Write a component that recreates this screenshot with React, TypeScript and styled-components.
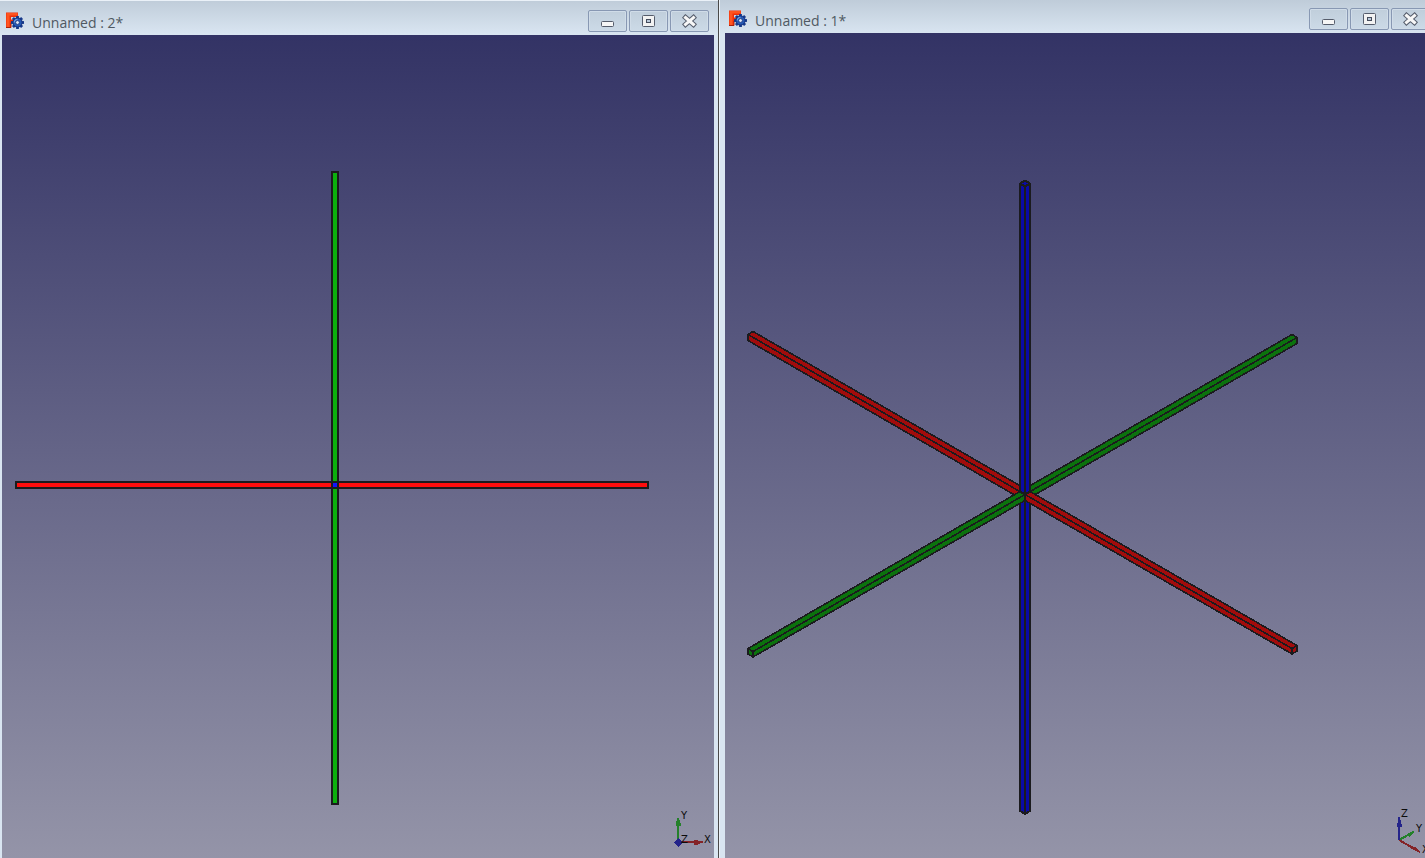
import React from "react";
import styled, { createGlobalStyle } from "styled-components";

const GlobalStyle = createGlobalStyle`
  *, *::before, *::after { box-sizing: border-box; }
  body {
    margin: 0;
    font-family: "Open Sans", "Noto Sans", sans-serif;
  }
`;

const Workspace = styled.main`
  display: flex;
  min-height: 100vh;
  overflow: hidden;
`;

const Pane = styled.div<{ $share: number }>`
  display: flex;
  flex: ${(p) => p.$share} 1 0;
  min-width: 0;
  overflow: hidden;
`;

const Window = styled.section<{ $divided?: boolean }>`
  display: flex;
  flex-direction: column;
  flex: none;
  width: ${(p) => (p.$divided ? "calc(100% + 14px)" : "100%")};
  padding: 0 4px 0 ${(p) => (p.$divided ? 6 : 2)}px;
  background: linear-gradient(#bfccd9 0, #d9e5f1 34px);
  border-left: ${(p) => (p.$divided ? "1px solid #4a4a4a" : "none")};
  box-shadow: inset ${(p) => (p.$divided ? "1px 0" : "0 1px")} 0 #eaf1f8;
`;

const TitleBar = styled.header<{ $height: number }>`
  display: flex;
  align-items: flex-end;
  flex: none;
  height: ${(p) => p.$height}px;
  padding: 0 5px 3px 4px;
`;

const Title = styled.h1`
  flex: 1;
  margin: 0 0 0 8px;
  font-size: 14px;
  font-weight: 400;
  line-height: 18px;
  color: #4f5962;
  white-space: nowrap;
`;

const Controls = styled.div`
  display: flex;
  gap: 2px;
`;

const ControlButton = styled.button`
  display: flex;
  align-items: center;
  justify-content: center;
  width: 39px;
  height: 22px;
  padding: 0;
  border: 1px solid #8898b3;
  border-radius: 2px;
  background: linear-gradient(#c0cedb, #ccdae7);
  box-shadow: inset 0 0 0 1px #d0dce8;
`;

const Viewport = styled.div`
  display: flex;
  flex: 1;
  min-height: 0;
  background: linear-gradient(#333365, #9494a8);
`;

const Scene = styled.svg`
  display: block;
  width: 100%;
  height: 100%;
`;

const AxisLabel = styled.text`
  font-family: "DejaVu Sans", sans-serif;
  font-size: 10px;
  fill: #0b0b0b;
`;

const EDGE = "#1b1b1e";
const RED = "#a20c0c";
const GREEN = "#0b720d";
const BLUE = "#0a0aa6";

function AppIcon() {
  return (
    <svg width="18" height="20" viewBox="0 0 18 20" aria-hidden="true">
      <path d="M0 0.5H12V5H5V7.5H9V11H5V16H0Z" fill="#ee300a" />
      <path d="M0.5 1H11.5V3.5H3.5V15.5H0.5Z" fill="#ff5420" />
      <path d="M0 15.5H5V11" fill="none" stroke="#a8200a" />
      <g transform="translate(11.5 10.5)">
        {[0, 45, 90, 135, 180, 225, 270, 315].map((a) => (
          <rect key={a} x="-1.4" y="-6.5" width="2.8" height="3" fill="#173a8c" transform={`rotate(${a})`} />
        ))}
        <circle r="4.6" fill="#2459b4" stroke="#142f7c" strokeWidth="1" />
        <path d="M-3.2 0A3.2 3.2 0 0 1 0 -3.2" fill="none" stroke="#6d9fe0" strokeWidth="1.2" />
        <circle r="1.9" fill="#e4ecf5" stroke="#142f7c" strokeWidth="0.8" />
      </g>
    </svg>
  );
}

function WindowControls() {
  return (
    <Controls>
      <ControlButton type="button" aria-label="Minimize">
        <svg width="15" height="14" viewBox="0 0 15 14">
          <rect x="1.5" y="7.5" width="12" height="5" rx="1" fill="#f6f6f6" stroke="#555c6b" />
        </svg>
      </ControlButton>
      <ControlButton type="button" aria-label="Maximize">
        <svg width="15" height="14" viewBox="0 0 15 14">
          <rect x="1.5" y="1.5" width="12" height="11" rx="1" fill="#f2f2f2" stroke="#555c6b" />
          <rect x="5.5" y="5.5" width="4" height="3" fill="#b9c8d8" stroke="#454c5c" />
        </svg>
      </ControlButton>
      <ControlButton type="button" aria-label="Close">
        <svg width="15" height="14" viewBox="0 0 15 14" strokeLinecap="square">
          <path d="M3.5 3.5L11.5 10.5M11.5 3.5L3.5 10.5" stroke="#555c6b" strokeWidth="5" />
          <path d="M3.5 3.5L11.5 10.5M11.5 3.5L3.5 10.5" stroke="#f7f7f7" strokeWidth="3" />
        </svg>
      </ControlButton>
    </Controls>
  );
}

function TopView() {
  return (
    <Scene viewBox="2 35 712 823" role="img" aria-label="Top view of three axes">
      <g shapeRendering="crispEdges" stroke={EDGE} strokeWidth="2">
        <rect x="332" y="172" width="6" height="632" fill="#0cb00d" />
        <rect x="16" y="482" width="632" height="6" fill="#ff0d0d" />
        <rect x="332" y="482" width="6" height="6" fill="#1212ff" />
      </g>
      <g shapeRendering="crispEdges">
        <path d="M677 819H679V842H677ZM677 818H679L680 821L681 824V826H676V824Z" fill="#24802a" />
        <path d="M679 841H703V843H679ZM694 840H697L701 842V843L697 845H694Z" fill="#842327" />
        <path d="M678.5 838L682.5 842.5L678.5 847L674.5 842.5Z" fill="#24248a" />
      </g>
      <AxisLabel x="681" y="819">Y</AxisLabel>
      <AxisLabel x="681" y="843">Z</AxisLabel>
      <AxisLabel x="704" y="843">X</AxisLabel>
    </Scene>
  );
}

function IsometricView() {
  return (
    <Scene viewBox="725 33 710 825" role="img" aria-label="Isometric view of three axes">
      <g shapeRendering="crispEdges" stroke={EDGE} strokeWidth="1.6">
        {/* halves that run away from the viewer */}
        <path d="M753 331.5L1030 491.5L1025 501L748 340.5V334.5Z" fill={RED} />
        <path d="M748 334.5L1025 494.5" />
        <path d="M1020 491.5L1292 334.5L1297 337.5V343.5L1025 500.5Z" fill={GREEN} />
        <path d="M1025 494.5L1297 337.5" />
        {/* lower half of the vertical bar */}
        <g strokeWidth="2">
          <path d="M1020 495V811L1025 814L1030 811V495Z" fill={BLUE} />
          <path d="M1025 495V814" />
        </g>
        {/* halves that run towards the viewer */}
        <path d="M748 648.5L1020 491.5L1025 494.5V500.5L753 657L748 654Z" fill={GREEN} />
        <path d="M748 648.5L753 651.5V657M753 651.5L1025 494.5" fill="none" />
        <path d="M1025 494.5L1030 491.5L1297 645.5V651L1292 654L1025 500.5Z" fill={RED} />
        <path d="M1297 645.5L1292 648.5V654M1292 648.5L1025 494.5" fill="none" />
        {/* upper half of the vertical bar */}
        <g strokeWidth="2">
          <path d="M1020 491.5V183.5L1025 180.5L1030 183.5V491.5L1025 494.5Z" fill={BLUE} />
          <path d="M1020 183.5L1025 186.5L1030 183.5M1025 186.5V494.5" fill="none" />
        </g>
      </g>
      <g shapeRendering="crispEdges">
        <path d="M1399 840L1410 834" stroke="#24802a" strokeWidth="2" />
        <path d="M1407 834L1413 831L1415 832L1409 837Z" fill="#24802a" />
        <path d="M1399 840L1420 852" stroke="#842327" strokeWidth="2" />
        <path d="M1412 846L1417 848L1419 851L1411 849Z" fill="#842327" />
        <path d="M1398 817H1400V840H1398ZM1398 820H1401L1402 827H1397Z" fill="#24248a" />
      </g>
      <AxisLabel x="1401" y="817">Z</AxisLabel>
      <AxisLabel x="1416" y="832">Y</AxisLabel>
      <AxisLabel x="1422" y="853">X</AxisLabel>
    </Scene>
  );
}

export default function App() {
  return (
    <>
      <GlobalStyle />
      <Workspace>
        <Pane $share={718}>
          <Window>
            <TitleBar $height={35}>
              <AppIcon />
              <Title>Unnamed : 2*</Title>
              <WindowControls />
            </TitleBar>
            <Viewport>
              <TopView />
            </Viewport>
          </Window>
        </Pane>
        <Pane $share={707}>
          <Window $divided>
            <TitleBar $height={33}>
              <AppIcon />
              <Title>Unnamed : 1*</Title>
              <WindowControls />
            </TitleBar>
            <Viewport>
              <IsometricView />
            </Viewport>
          </Window>
        </Pane>
      </Workspace>
    </>
  );
}
